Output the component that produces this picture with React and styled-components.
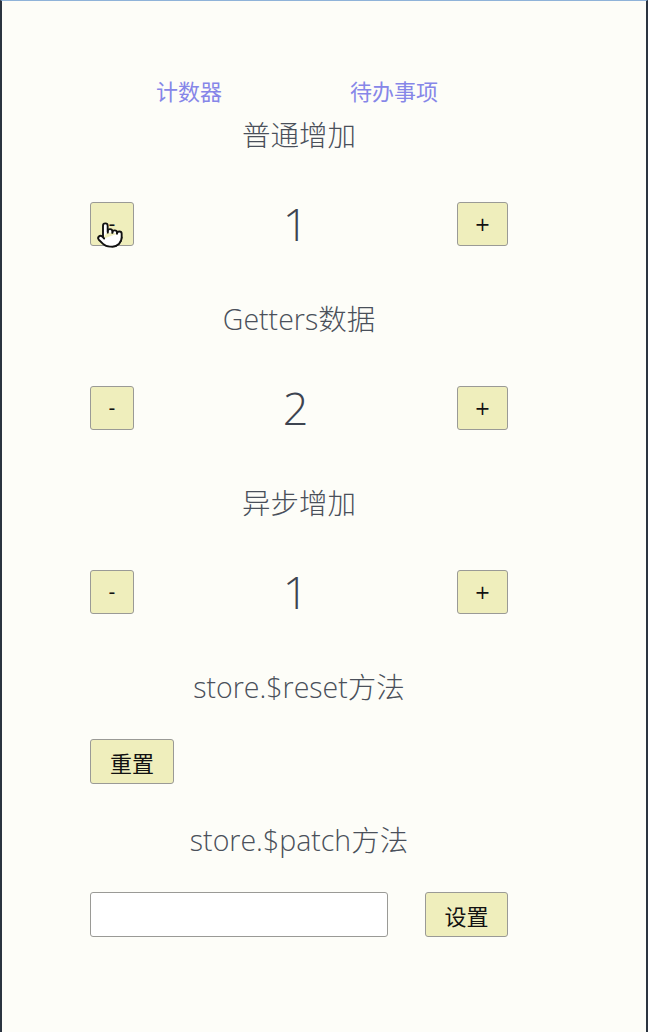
import React, { useState } from "react";
import styled, { createGlobalStyle } from "styled-components";
import { Pointer } from "lucide-react";

const GlobalStyle = createGlobalStyle`
  * { box-sizing: border-box; }
  body {
    margin: 0;
    background: #fdfdf8;
    font-family: "Open Sans", "Noto Sans CJK SC", sans-serif;
  }
`;

const Frame = styled.div`
  width: 648px;
  min-height: 1032px;
  border-top: 1px solid #8fb3d9;
  border-left: 2px solid #2b3440;
  border-right: 2px solid #2b3440;
  background: #fdfdf8;
`;

const Content = styled.div`
  width: 418px;
  margin-left: 88px;
  padding-top: 77px;
  display: flex;
  flex-direction: column;
`;

const Nav = styled.nav`
  display: flex;
  height: 24px;
  align-items: center;
  padding-left: 66px;
  gap: 128px;
`;

const NavLink = styled.a`
  font-family: "Noto Sans CJK SC", sans-serif;
  font-weight: 400;
  font-size: 22px;
  line-height: 24px;
  color: #8686e8;
  text-decoration: none;
  cursor: pointer;
`;

const Title = styled.h2`
  margin: ${(p) => p.$top || 0}px 0 ${(p) => p.$bottom || 0}px;
  height: 40px;
  line-height: 40px;
  text-align: center;
  font-family: "Open Sans", "Noto Sans CJK SC", sans-serif;
  font-weight: 300;
  font-size: 28.5px;
  color: #4a505a;
`;

const Row = styled.div`
  position: relative;
  display: flex;
  align-items: center;
  justify-content: space-between;
  height: 44px;
  margin-bottom: 53px;
`;

const Btn = styled.button`
  width: ${(p) => p.$w}px;
  height: ${(p) => p.$h || 44}px;
  padding: 0;
  border: 1px solid #9a9a96;
  border-radius: 3px;
  background: #efeebc;
  color: #111;
  font-family: ${(p) => (p.$sign ? '"DejaVu Sans", sans-serif' : '"Noto Sans CJK SC", sans-serif')};
  font-size: ${(p) => p.$size || 19}px;
  cursor: pointer;
`;

const Count = styled.span`
  font-family: "Open Sans", sans-serif;
  font-weight: 300;
  font-size: 45px;
  line-height: 44px;
  color: #3d4450;
`;

const Cursor = styled.div`
  position: absolute;
  left: 6px;
  top: 19px;
  width: 28px;
  height: 34px;
  pointer-events: none;
`;

const Reset = styled.div`
  display: flex;
  margin-bottom: 36px;
`;

const PatchRow = styled.div`
  display: flex;
  justify-content: space-between;
  align-items: center;
`;

const Field = styled.input`
  width: 298px;
  height: 45px;
  border: 1px solid #9a9a96;
  border-radius: 3px;
  background: #fff;
  font-size: 18px;
  padding: 0 8px;
`;

const Counter = ({ title, value, top, onDec, onInc, pointer }) => (
  <>
    <Title $top={top} $bottom={47}>{title}</Title>
    <Row>
      <Btn $w={44} $sign onClick={onDec}>-</Btn>
      <Count>{value}</Count>
      <Btn $w={51} $sign onClick={onInc}>+</Btn>
      {pointer && (
        <Cursor>
          <Pointer size={28} strokeWidth={1.6} color="#111" fill="#fff" />
        </Cursor>
      )}
    </Row>
  </>
);

export default function App() {
  const [count, setCount] = useState(1);
  const [asyncCount, setAsyncCount] = useState(1);
  const [text, setText] = useState("");

  return (
    <Frame>
      <GlobalStyle />
      <Content>
        <Nav>
          <NavLink>计数器</NavLink>
          <NavLink>待办事项</NavLink>
        </Nav>
        <Counter
          title="普通增加"
          value={count}
          top={13}
          pointer
          onDec={() => setCount(count - 1)}
          onInc={() => setCount(count + 1)}
        />
        <Counter
          title="Getters数据"
          value={count * 2}
          onDec={() => setCount(count - 1)}
          onInc={() => setCount(count + 1)}
        />
        <Counter
          title="异步增加"
          value={asyncCount}
          onDec={() => setTimeout(() => setAsyncCount((v) => v - 1), 500)}
          onInc={() => setTimeout(() => setAsyncCount((v) => v + 1), 500)}
        />
        <Title $bottom={32}>store.$reset方法</Title>
        <Reset>
          <Btn $w={84} $h={45} $size={22} onClick={() => setCount(1)}>重置</Btn>
        </Reset>
        <Title $bottom={32}>store.$patch方法</Title>
        <PatchRow>
          <Field value={text} onChange={(e) => setText(e.target.value)} />
          <Btn $w={83} $h={45} $size={22}>设置</Btn>
        </PatchRow>
      </Content>
    </Frame>
  );
}
